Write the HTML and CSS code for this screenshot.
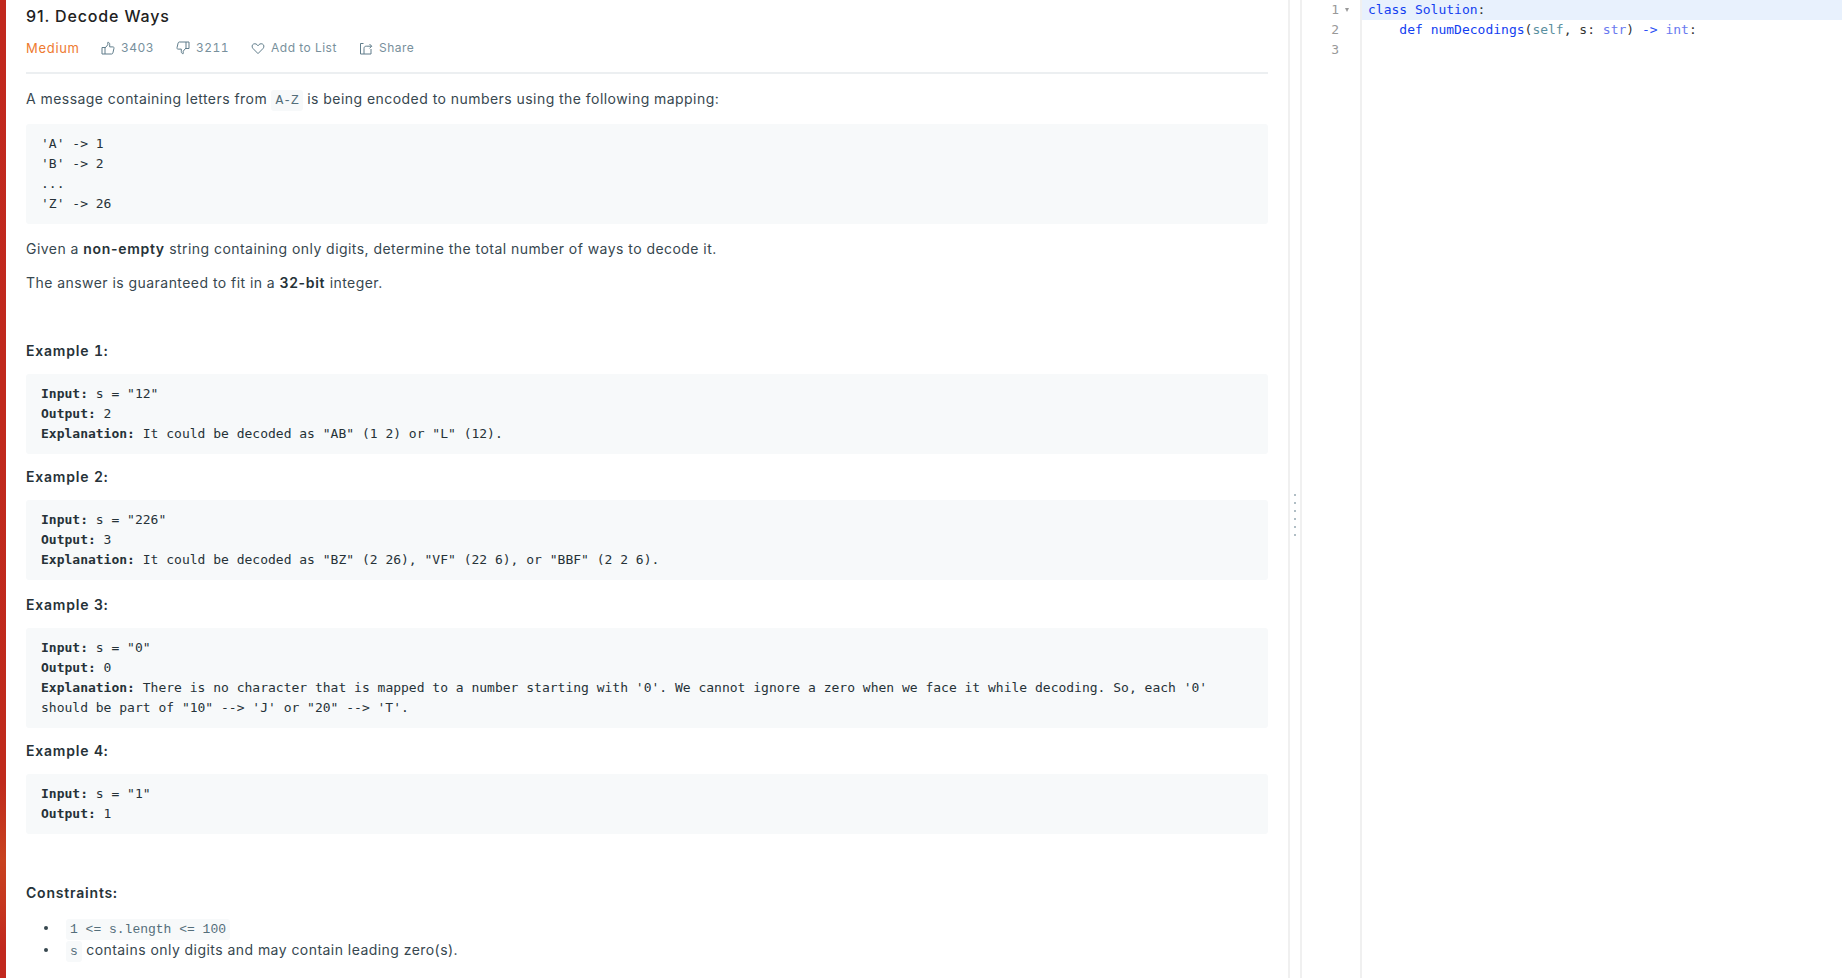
FILE: index.html
```html
<!DOCTYPE html>
<html lang="en">
<head>
<meta charset="utf-8">
<title>91. Decode Ways</title>
<link rel="stylesheet" href="styles.css">
</head>
<body>
<div class="app">
  <div class="accent"></div>
  <main class="desc">
    <h1 class="title">91. Decode Ways</h1>
    <div class="meta">
      <span class="difficulty">Medium</span>
      <span class="act act-like">
        <svg class="ic" viewBox="0 0 14 14"><path d="M1 6.500h3v6.500H1zM4 7 6.800 3.800V1.300c1.200 0 1.900.8 1.900 2v2.600h3.200c.8 0 1.300.6 1.100 1.300l-1.100 4.700c-.2.600-.6 1.100-1.200 1.100H4"/></svg>
        <span>3403</span>
      </span>
      <span class="act act-dislike">
        <svg class="ic" viewBox="0 0 14 14"><path d="M13 7.500h-3V1h3zM10 7l-2.800 3.200v2.500c-1.200 0-1.900-.8-1.900-2V8.100H2.100c-.8 0-1.300-.6-1.100-1.300l1.100-4.700c.2-.6.6-1.100 1.200-1.100H10"/></svg>
        <span>3211</span>
      </span>
      <span class="act act-list">
        <svg class="ic" viewBox="0 0 14 14"><path d="M7 12.600 2 7.500C.5 5.900 1 3.700 2.600 3c1.700-.7 3.400.1 4.400 1.800C8 3.100 9.700 2.300 11.400 3c1.600.7 2.100 2.900.6 4.500z"/></svg>
        <span>Add to List</span>
      </span>
      <span class="act act-share">
        <svg class="ic" viewBox="0 0 14 14"><path d="M4.500 2.500H1.500V13h10.500V8M5 13V7.500c0-1.500.8-2.300 2.300-2.300h5.200M10.500 3l2.200 2.200-2.200 2.200"/></svg>
        <span>Share</span>
      </span>
    </div>
    <div class="content">
      <p class="first">A message containing letters from <code>A-Z</code> is being encoded to numbers using the following mapping:</p>
      <pre class="loose">'A' -&gt; 1
'B' -&gt; 2
...
'Z' -&gt; 26</pre>
      <p>Given a <strong>non-empty</strong> string containing only digits, determine the total number of ways to decode it.</p>
      <p class="gap-after">The answer is guaranteed to fit in a <strong>32-bit</strong> integer.</p>
      <p class="ex"><strong>Example 1:</strong></p>
      <pre><strong>Input:</strong> s = "12"
<strong>Output:</strong> 2
<strong>Explanation:</strong> It could be decoded as "AB" (1 2) or "L" (12).</pre>
      <p class="ex"><strong>Example 2:</strong></p>
      <pre class="loose"><strong>Input:</strong> s = "226"
<strong>Output:</strong> 3
<strong>Explanation:</strong> It could be decoded as "BZ" (2 26), "VF" (22 6), or "BBF" (2 2 6).</pre>
      <p class="ex"><strong>Example 3:</strong></p>
      <pre><strong>Input:</strong> s = "0"
<strong>Output:</strong> 0
<strong>Explanation:</strong> There is no character that is mapped to a number starting with '0'. We cannot ignore a zero when we face it while decoding. So, each '0'
should be part of "10" --&gt; 'J' or "20" --&gt; 'T'.</pre>
      <p class="ex"><strong>Example 4:</strong></p>
      <pre class="gap-after"><strong>Input:</strong> s = "1"
<strong>Output:</strong> 1</pre>
      <p class="ex con"><strong>Constraints:</strong></p>
      <ul>
        <li><code>1 &lt;= s.length &lt;= 100</code></li>
        <li><code>s</code> contains only digits and may contain leading zero(s).</li>
      </ul>
    </div>
  </main>
  <div class="splitter">
    <div class="grip"><i></i><i></i><i></i><i></i><i></i><i></i></div>
  </div>
  <section class="editor">
    <div class="gutter">
      <div class="num">1<span class="fold"></span></div>
      <div class="num">2</div>
      <div class="num">3</div>
    </div>
    <div class="code">
      <div class="line active"><span class="kw">class</span> <span class="def">Solution</span>:</div>
      <div class="line">    <span class="kw">def</span> <span class="def">numDecodings</span>(<span class="self">self</span>, s: <span class="bi">str</span>) <span class="op">-&gt;</span> <span class="bi">int</span>:</div>
      <div class="line"></div>
    </div>
  </section>
</div>
</body>
</html>
```
FILE: styles.css
```css
* { box-sizing: border-box; }
html, body { margin: 0; height: 100%; background: #fff; overflow: hidden; }
body { font-family: Inter, "Liberation Sans", sans-serif; color: #263238; }
.app { display: flex; height: 978px; width: 1842px; }
.accent { width: 6px; flex: none; background: linear-gradient(180deg, #c1281e 0%, #bf2a1c 80%, #c8421f 88%, #c6381f 92%, #c1281e 97%); }
.desc { width: 1282px; flex: none; padding: 0 20px; overflow: hidden; }
.title { margin: 0; padding-top: 6px; font-size: 16px; line-height: 20px; font-weight: 500; letter-spacing: .85px; color: #212121; }
.meta { display: flex; align-items: center; height: 20px; margin-top: 12px; font-size: 12px; line-height: 20px; letter-spacing: .5px; font-variant-numeric: tabular-nums; color: #78909c; }
.difficulty { color: #ee7a30; width: 75px; font-size: 13px; letter-spacing: .7px; }
.act { display: inline-flex; align-items: center; gap: 6px; }
.act-like { width: 75px; }
.act-dislike { width: 75px; }
.act-list { width: 108px; }
.ic { width: 14px; height: 14px; fill: none; stroke: #607d8b; stroke-width: 1; flex: none; }
.content { margin-top: 14px; border-top: 2px solid #eceff1; padding-top: 15px; font-size: 14px; line-height: 20px; letter-spacing: .45px; color: #37474f; }
p { margin: 0 0 14px; }
p.first { margin-bottom: 15px; }
pre.gap-after { margin-bottom: 49px; }
p.gap-after { margin-bottom: 48px; }
p.ex { margin-bottom: 13px; }
p.ex.con { margin-bottom: 14px; }
p.ex strong { letter-spacing: .8px; font-variant-numeric: tabular-nums; }
strong { font-weight: 600; letter-spacing: .7px; color: #263238; }
pre { margin: 0 0 13px; padding: 10px 15px; background: #f7f9fa; border-radius: 3px; font-family: "DejaVu Sans Mono", monospace; font-size: 13px; line-height: 20px; letter-spacing: 0; color: #263238; white-space: pre-wrap; }
pre.loose { margin-bottom: 15px; }
pre strong { font-weight: 700; letter-spacing: 0; }
code { font-family: "Liberation Mono", monospace; font-size: 13px; line-height: 1; letter-spacing: 0; color: #546e7a; background: #f7f9fa; padding: 3px 4px; border-radius: 3px; }
ul { margin: 0; padding-left: 40px; list-style: none; }
li { line-height: 22px; position: relative; }
li::before { content: ""; position: absolute; left: -22px; top: 9px; width: 4px; height: 4px; border-radius: 50%; background: #37474f; }
.splitter { width: 14px; flex: none; border-left: 2px solid #f0f0f0; border-right: 2px solid #f0f0f0; padding-top: 52px; display: flex; align-items: center; justify-content: center; }
.grip { display: flex; flex-direction: column; gap: 6px; }
.grip i { display: block; width: 2px; height: 2px; background: #b0bec5; }
.editor { flex: 1; display: flex; font-family: "DejaVu Sans Mono", monospace; font-size: 13px; line-height: 20px; }
.gutter { width: 60px; border-right: 2px solid #f0f0f0; flex: none; }
.num { height: 20px; padding-right: 21px; text-align: right; color: #999; position: relative; }
.fold { position: absolute; left: 43px; top: 8px; border-left: 2.500px solid transparent; border-right: 2.500px solid transparent; border-top: 4px solid #999; }
.code { flex: 1; }
.line { height: 20px; padding-left: 6px; white-space: pre; color: #333; }
.line.active { background: #e8f1fd; }
.kw { color: #1340f0; }
.def { color: #1340f0; }
.self { color: #5a8fa0; }
.bi { color: #6a7aef; }
.op { color: #2a50f5; }
```
